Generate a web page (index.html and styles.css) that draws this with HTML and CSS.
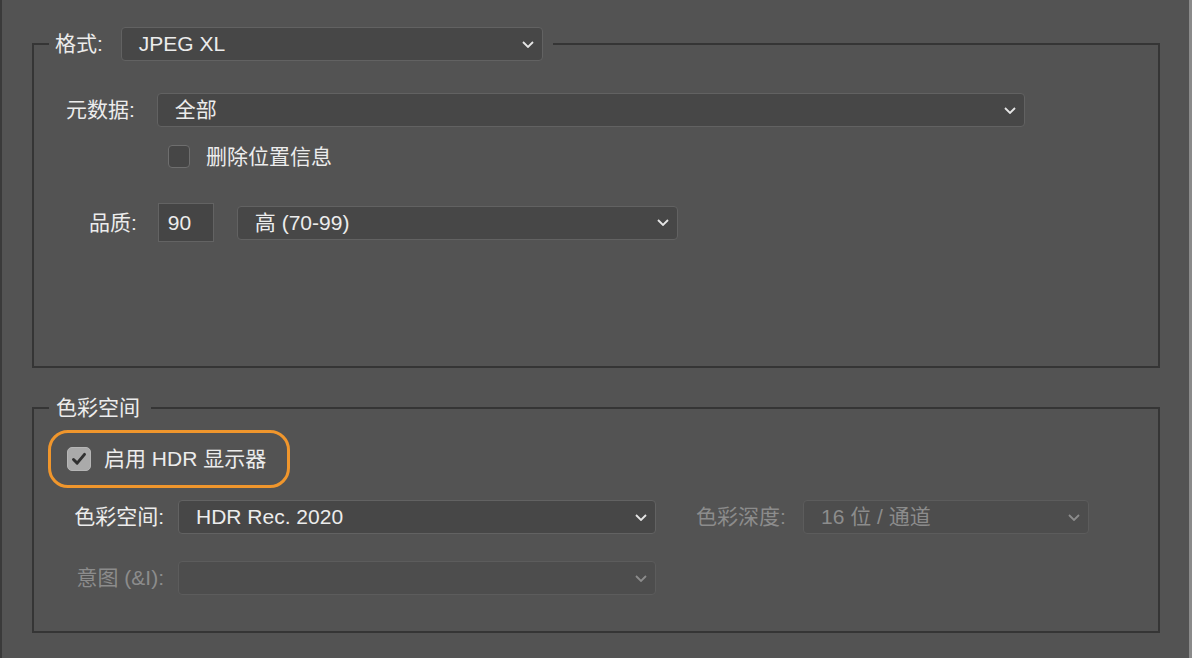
FILE: index.html
```html
<!DOCTYPE html>
<html lang="zh-CN">
<head>
<meta charset="utf-8">
<title>格式</title>
<link rel="stylesheet" href="styles.css">
</head>
<body>
<div class="page">
  <fieldset class="group group-format">
    <legend class="legend legend-format">
      <span class="label">格式:</span>
      <div class="select select-format"><span class="value">JPEG XL</span><svg class="chev" viewBox="0 0 12 7" width="12" height="7"><path d="M1 1 L6 6 L11 1" /></svg></div>
    </legend>
    <div class="format-body">
      <div class="row row-meta">
        <span class="label label-meta">元数据:</span>
        <div class="select select-meta"><span class="value">全部</span><svg class="chev" viewBox="0 0 12 7" width="12" height="7"><path d="M1 1 L6 6 L11 1" /></svg></div>
      </div>
      <div class="row row-strip">
        <span class="checkbox"></span>
        <span class="check-label">删除位置信息</span>
      </div>
      <div class="row row-quality">
        <span class="label label-quality">品质:</span>
        <div class="num-input">90</div>
        <div class="select select-quality"><span class="value">高 (70-99)</span><svg class="chev" viewBox="0 0 12 7" width="12" height="7"><path d="M1 1 L6 6 L11 1" /></svg></div>
      </div>
    </div>
  </fieldset>

  <fieldset class="group group-color">
    <legend class="legend legend-color">色彩空间</legend>
    <div class="color-body">
      <div class="hdr-highlight">
        <span class="checkbox checked"><svg viewBox="0 0 24 24" width="24" height="24"><path d="M6 12.5 L10 16.5 L18 7" /></svg></span>
        <span class="check-label">启用 HDR 显示器</span>
      </div>
      <div class="row row-space">
        <span class="label label-col">色彩空间:</span>
        <div class="select select-space"><span class="value">HDR Rec. 2020</span><svg class="chev" viewBox="0 0 12 7" width="12" height="7"><path d="M1 1 L6 6 L11 1" /></svg></div>
        <span class="label label-depth disabled">色彩深度:</span>
        <div class="select select-depth disabled"><span class="value">16 位 / 通道</span><svg class="chev" viewBox="0 0 12 7" width="12" height="7"><path d="M1 1 L6 6 L11 1" /></svg></div>
      </div>
      <div class="row row-intent">
        <span class="label label-col disabled">意图 (&amp;I):</span>
        <div class="select select-space disabled"><span class="value"></span><svg class="chev" viewBox="0 0 12 7" width="12" height="7"><path d="M1 1 L6 6 L11 1" /></svg></div>
      </div>
    </div>
  </fieldset>
</div>
</body>
</html>
```
FILE: styles.css
```css
html, body {
  margin: 0;
  padding: 0;
}
body {
  background: #535353;
  font-family: "Liberation Sans", "Noto Sans CJK SC", sans-serif;
  font-size: 21px;
  color: #ececec;
  width: 1192px;
  height: 658px;
  overflow: hidden;
}
.page {
  box-sizing: border-box;
  height: 658px;
  border-left: 2px solid #3a3a3a;
  border-right: 3px solid #8a8a8a;
  overflow: hidden;
}
.group {
  box-sizing: border-box;
  border: 2px solid #353535;
  padding: 0;
  margin: 0 29px 0 30px;
  min-width: 0;
}
.group-format {
  margin-top: 27px;
}
.group-color {
  margin-top: 27px;
}
.legend {
  margin-left: 15px;
  padding: 0 10px 0 6px;
}
.legend-format {
  display: flex;
  align-items: center;
  gap: 18px;
  height: 34px;
}
.legend-color {
  line-height: 26px;
  height: 26px;
  padding: 0 11px 0 7px;
}
.label {
  white-space: nowrap;
  line-height: 26px;
}
.disabled {
  color: #8c8c8c;
}
.select {
  box-sizing: border-box;
  height: 34px;
  display: flex;
  align-items: center;
  justify-content: space-between;
  padding: 0 8px 0 17px;
  background: #474747;
  border: 1px solid #626262;
  border-radius: 4px;
}
.select .value {
  line-height: 26px;
  white-space: nowrap;
}
.chev {
  display: block;
  flex: none;
}
.chev path {
  fill: none;
  stroke: #e6e6e6;
  stroke-width: 1.8;
}
.select.disabled {
  background: #4d4d4d;
  border-color: #5c5c5c;
}
.select.disabled .chev path {
  stroke: #8c8c8c;
}
.select-format {
  width: 422px;
}
.format-body {
  padding: 32px 0 124px 0;
}
.row {
  display: flex;
  align-items: center;
}
.row-meta {
  padding-left: 32px;
  gap: 22px;
}
.select-meta {
  width: 868px;
}
.row-strip {
  margin-top: 18px;
  padding-left: 134px;
  gap: 16px;
  height: 23px;
}
.checkbox {
  box-sizing: border-box;
  width: 22px;
  height: 23px;
  border: 1.5px solid #6e6e6e;
  border-radius: 4px;
  background: #464646;
  flex: none;
  display: flex;
  align-items: center;
  justify-content: center;
}
.checkbox.checked {
  width: 24px;
  height: 24px;
  background: #aaaaaa;
  border: 1px solid #b6b6b6;
  border-radius: 5px;
}
.checkbox.checked svg {
  width: 22px;
  height: 22px;
}
.checkbox.checked path {
  fill: none;
  stroke: #303030;
  stroke-width: 3.2;
  stroke-linecap: round;
  stroke-linejoin: round;
}
.check-label {
  line-height: 26px;
  white-space: nowrap;
}
.row-quality {
  margin-top: 35px;
  padding-left: 55px;
}
.num-input {
  box-sizing: border-box;
  width: 56px;
  height: 39px;
  margin-left: 21px;
  padding-left: 9px;
  line-height: 37px;
  background: #454545;
  border: 1px solid #636363;
}
.select-quality {
  width: 441px;
  margin-left: 23px;
}
.color-body {
  padding: 9px 0 36px 0;
}
.hdr-highlight {
  box-sizing: border-box;
  width: 242px;
  height: 58px;
  margin-left: 14px;
  border: 3px solid #f0962c;
  border-radius: 20px;
  display: flex;
  align-items: center;
  padding-left: 16px;
  gap: 13px;
}
.row-space {
  margin-top: 12px;
  padding-left: 36px;
}
.label-col {
  width: 94px;
  text-align: right;
  margin-right: 14px;
}
.select-space {
  width: 478px;
}
.label-depth {
  margin-left: 40px;
  width: 94px;
  margin-right: 13px;
}
.select-depth {
  width: 286px;
}
.row-intent {
  margin-top: 27px;
  padding-left: 36px;
}
```
